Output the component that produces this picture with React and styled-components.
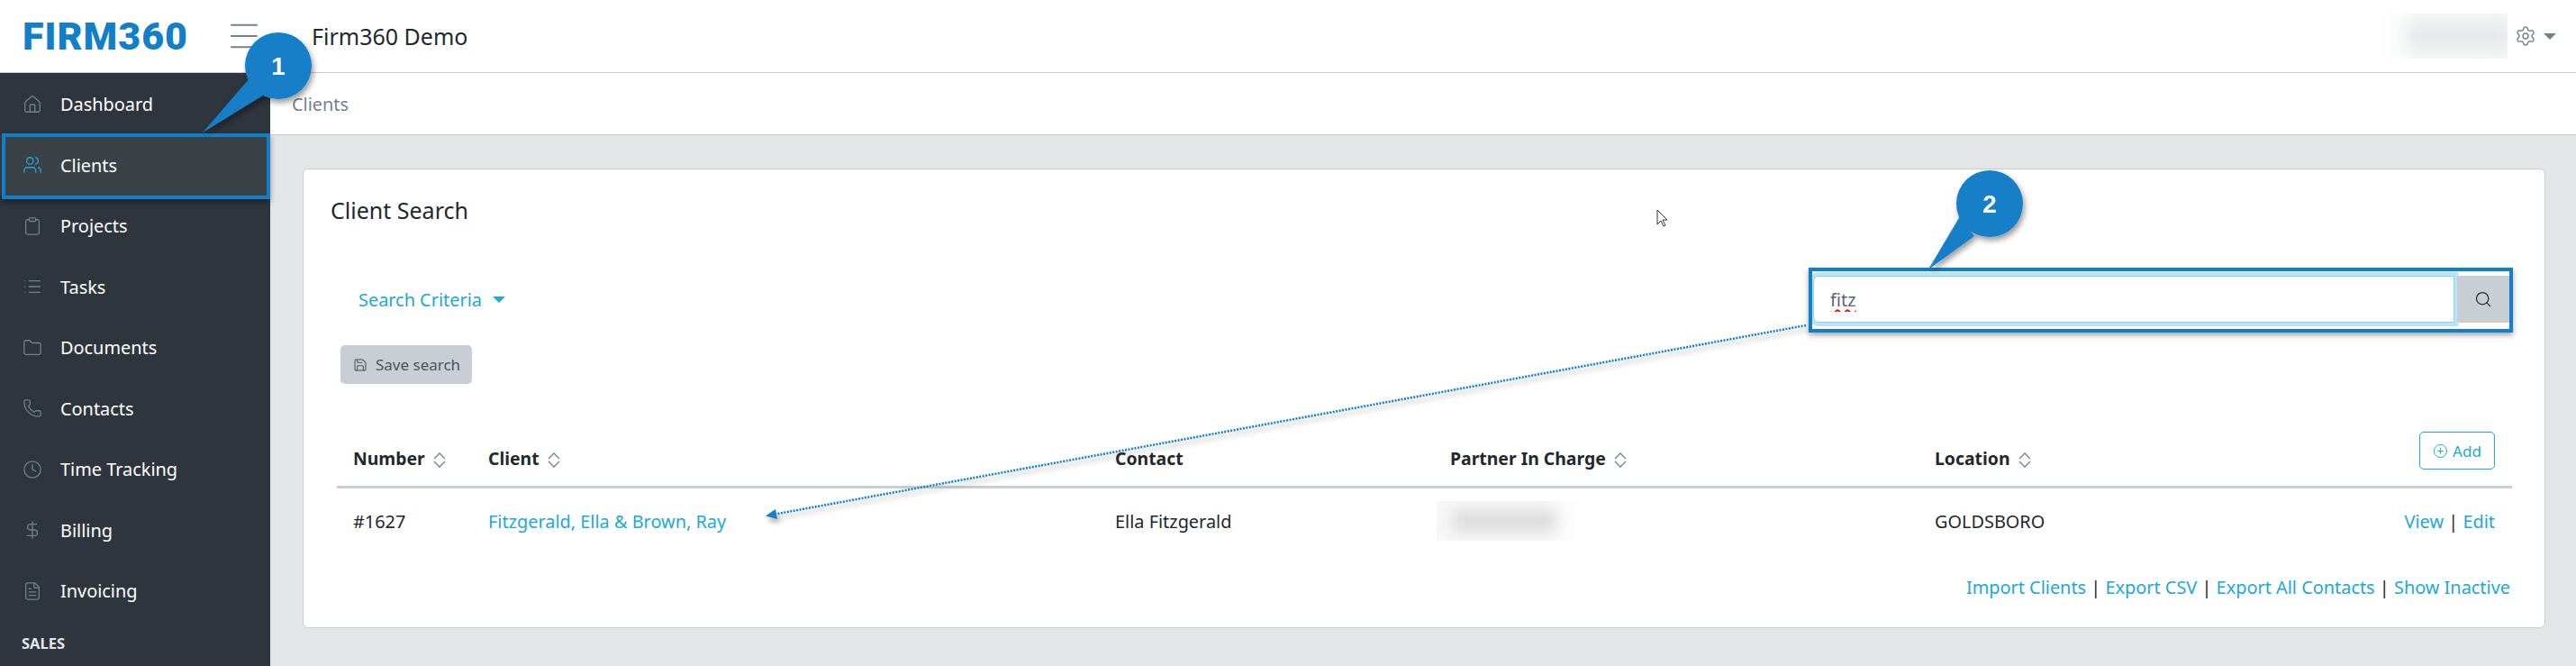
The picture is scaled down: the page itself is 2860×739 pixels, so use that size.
import React from 'react';
import styled, { createGlobalStyle } from 'styled-components';
import {
    Home, Users, Clipboard, List, Folder, Phone, Clock, DollarSign, FileText,
    Save, Search, Settings, CirclePlus, Menu,
} from 'lucide-react';

const GlobalStyle = createGlobalStyle`
    html, body {
        margin: 0;
        padding: 0;
        background: #e4e5e6;
    }
    body {
        font-family: "Noto Sans", "Open Sans", sans-serif;
        font-size: 19.9px;
        color: #23282c;
    }
`;

const Page = styled.div`
    position: relative;
    width: 2860px;
    height: 739px;
    overflow: hidden;
    background: #e4e5e6;
`;

const Header = styled.header`
    display: flex;
    align-items: center;
    height: 80px;
    background: #fff;
    border-bottom: 1px solid #c8ced3;
`;

const Logo = styled.div`
    width: 181px;
    margin-left: 25px;
    font-family: Roboto, sans-serif;
    font-weight: 900;
    font-size: 43px;
    line-height: 44px;
    color: #127fc8;
    letter-spacing: 1px;
    white-space: nowrap;
`;

const Burger = styled.div`
    display: flex;
    margin-left: 44px;
    color: #73818f;
`;

const AppTitle = styled.div`
    margin-left: 54px;
    font-size: 25px;
    color: #23282c;
`;

const UserArea = styled.div`
    display: flex;
    align-items: center;
    margin-left: auto;
    margin-right: 22px;
    color: #73818f;
`;

const UserBlur = styled.div`
    width: 144px;
    height: 50px;
    margin-right: 8px;
    overflow: hidden;
    background: linear-gradient(90deg, #fff 0%, #f6f7f7 30%, #f4f5f5 100%);
`;

const Caret = styled.span`
    display: inline-block;
    width: 0;
    height: 0;
    margin-left: ${(p) => p.$gap || 8}px;
    border-top: 7px solid ${(p) => p.$color || '#73818f'};
    border-left: 7px solid transparent;
    border-right: 7px solid transparent;
`;

const Body = styled.div`
    display: flex;
    height: 658px;
`;

const Sidebar = styled.nav`
    flex: none;
    width: 300px;
    padding-top: 1px;
    background: #2f353d;
`;

const NavRow = styled.div`
    display: flex;
    align-items: center;
    height: 67.5px;
    padding-left: 25px;
    color: #fff;
    background: ${(p) => (p.$active ? '#3a4248' : 'transparent')};
    svg {
        color: ${(p) => (p.$active ? '#20a8d8' : '#73818f')};
    }
`;

const NavLabel = styled.span`
    margin-left: 20px;
`;

const NavTitle = styled.div`
    margin-top: 12px;
    padding-left: 24px;
    font-size: 16.5px;
    font-weight: 700;
    color: #e4e7ea;
`;

const Main = styled.main`
    flex: 1;
    min-width: 0;
`;

const Breadcrumb = styled.div`
    display: flex;
    align-items: center;
    height: 68px;
    padding-left: 24px;
    background: #fff;
    border-bottom: 1px solid #c8ced3;
    color: #73818f;
`;

const Content = styled.div`
    padding: 37px 34px 0 36px;
`;

const Card = styled.section`
    box-sizing: border-box;
    height: 510px;
    padding: 0 38px 0 37px;
    background: #fff;
    border: 1px solid #c8ced3;
    border-radius: 6px;
`;

const CardTitle = styled.h2`
    margin: 29px 0 0 -7px;
    font-size: 25px;
    font-weight: 400;
    line-height: 32px;
`;

const Toolbar = styled.div`
    display: flex;
    align-items: center;
    justify-content: space-between;
    margin-top: 57px;
    height: 52px;
`;

const CriteriaLink = styled.a`
    display: flex;
    align-items: center;
    margin-left: 24px;
    color: #20a8d8;
`;

const SearchGroup = styled.div`
    display: flex;
    width: 773px;
    height: 52px;
    margin-right: 1px;
`;

const SearchInput = styled.input`
    flex: 1;
    min-width: 0;
    box-sizing: border-box;
    height: 52px;
    padding: 0 18px;
    font: inherit;
    color: #5c6873;
    background: #fff;
    border: 1.5px solid #8ad4ee;
    border-radius: 6px 0 0 6px;
    outline: none;
    box-shadow: 0 0 0 4px rgba(32, 168, 216, 0.3);
    text-decoration: underline wavy #f00 1.5px;
    text-underline-offset: 3px;
`;

const SearchButton = styled.button`
    display: flex;
    align-items: center;
    justify-content: center;
    flex: none;
    width: 58px;
    margin-left: 3px;
    padding: 0;
    background: #c8ced3;
    border: none;
    color: #23282c;
`;

const SaveButton = styled.button`
    display: flex;
    align-items: center;
    gap: 9px;
    box-sizing: border-box;
    width: 146px;
    height: 43px;
    margin: 25px 0 0 4px;
    padding: 0 0 0 14px;
    font-family: inherit;
    font-size: 17px;
    color: #4a545c;
    background: #c8ced3;
    border: none;
    border-radius: 5px;
`;

const Table = styled.table`
    width: 2415px;
    margin-top: 51px;
    border-collapse: collapse;
    table-layout: fixed;
`;

const Th = styled.th`
    height: 62px;
    padding: 0 19px 0 18px;
    font-size: 19.4px;
    font-weight: 700;
    text-align: ${(p) => (p.$right ? 'right' : 'left')};
    vertical-align: ${(p) => (p.$right ? 'top' : 'middle')};
    border-bottom: 3px solid #c8ced3;
    white-space: nowrap;
`;

const SortMark = styled.svg`
    margin-left: 9px;
    vertical-align: middle;
    color: #73818f;
`;

const Td = styled.td`
    height: 72px;
    padding: 0 19px 0 18px;
    text-align: ${(p) => (p.$right ? 'right' : 'left')};
`;

const BlurCell = styled.div`
    width: 160px;
    height: 44px;
    margin-left: -15px;
    overflow: hidden;
    background: linear-gradient(90deg, #f7f7f7 0%, #f7f7f7 70%, #fff 100%);
`;

const BlurBlob = styled.div`
    width: 115px;
    height: 24px;
    margin: 10px 0 0 18px;
    background: #dcdcdc;
    filter: blur(8px);
`;

const UserBlob = styled(BlurBlob)`
    width: 110px;
    height: 26px;
    margin: 12px 0 0 34px;
    background: #e6e8e9;
`;

const AddButton = styled.button`
    display: inline-flex;
    align-items: center;
    justify-content: center;
    gap: 5px;
    box-sizing: border-box;
    width: 84px;
    height: 42px;
    margin-top: 2px;
    padding: 0;
    font-family: inherit;
    font-size: 17px;
    color: #20a8d8;
    background: #fff;
    border: 1.5px solid #20a8d8;
    border-radius: 5px;
`;

const TextLink = styled.a`
    color: #20a8d8;
`;

const FooterLinks = styled.div`
    margin-top: 24px;
    line-height: 28px;
    text-align: right;
`;

/* annotations lying over the screenshot */
const ClientsHighlight = styled.div`
    position: absolute;
    box-sizing: border-box;
    left: 2px;
    top: 148px;
    width: 298px;
    height: 73px;
    border: 4px solid #127fc8;
    box-shadow: 0 3px 6px rgba(0, 0, 0, 0.4);
`;

const SearchHighlight = styled.div`
    position: absolute;
    box-sizing: border-box;
    left: 2008px;
    top: 297px;
    width: 782px;
    height: 72px;
    border: 4px solid #127fc8;
    box-shadow: 0 3px 6px rgba(0, 0, 0, 0.35);
`;

const Annotations = styled.svg`
    position: absolute;
    left: 0;
    top: 0;
    pointer-events: none;
`;

const CalloutNumber = styled.text`
    font-family: "Liberation Sans", sans-serif;
    font-weight: 700;
    font-size: 28px;
    fill: #fff;
    text-anchor: middle;
`;

const navItems = [
    { label: 'Dashboard', icon: Home },
    { label: 'Clients', icon: Users, active: true },
    { label: 'Projects', icon: Clipboard },
    { label: 'Tasks', icon: List },
    { label: 'Documents', icon: Folder },
    { label: 'Contacts', icon: Phone },
    { label: 'Time Tracking', icon: Clock },
    { label: 'Billing', icon: DollarSign },
    { label: 'Invoicing', icon: FileText },
];

const Sortable = () => (
    <SortMark width="14" height="18" viewBox="0 0 14 18" fill="none" stroke="currentColor" strokeWidth="1.3">
        <path d="M1 8 L7 2 L13 8" />
        <path d="M1 11 L7 17 L13 11" />
    </SortMark>
);

const Callout = ({ cx, cy, tail, number }) => (
    <g filter="url(#shade)">
        <path d={tail} fill="#127fc8" />
        <circle cx={cx} cy={cy} r="37" fill="#127fc8" />
        <CalloutNumber x={cx} y={cy + 10}>{number}</CalloutNumber>
    </g>
);

export default function App() {
    return (
        <Page>
            <GlobalStyle />
            <Header>
                <Logo>FIRM360</Logo>
                <Burger><Menu size={42} strokeWidth={1.15} /></Burger>
                <AppTitle>Firm360 Demo</AppTitle>
                <UserArea>
                    <UserBlur><UserBlob /></UserBlur>
                    <Settings size={24} strokeWidth={1.4} />
                    <Caret $gap={8} />
                </UserArea>
            </Header>
            <Body>
                <Sidebar>
                    {navItems.map(({ label, icon: Icon, active }) => (
                        <NavRow key={label} $active={active}>
                            <Icon size={22} strokeWidth={1.4} />
                            <NavLabel>{label}</NavLabel>
                        </NavRow>
                    ))}
                    <NavTitle>SALES</NavTitle>
                </Sidebar>
                <Main>
                    <Breadcrumb>Clients</Breadcrumb>
                    <Content>
                        <Card>
                            <CardTitle>Client Search</CardTitle>
                            <Toolbar>
                                <CriteriaLink>Search Criteria<Caret $gap={12} $color="#20a8d8" /></CriteriaLink>
                                <SearchGroup>
                                    <SearchInput readOnly value="fitz" />
                                    <SearchButton><Search size={20} strokeWidth={1.5} /></SearchButton>
                                </SearchGroup>
                            </Toolbar>
                            <SaveButton><Save size={16} strokeWidth={1.6} />Save search</SaveButton>
                            <Table>
                                <colgroup>
                                    <col width="150" />
                                    <col width="696" />
                                    <col width="372" />
                                    <col width="538" />
                                    <col width="400" />
                                    <col width="259" />
                                </colgroup>
                                <thead>
                                    <tr>
                                        <Th>Number<Sortable /></Th>
                                        <Th>Client<Sortable /></Th>
                                        <Th>Contact</Th>
                                        <Th>Partner In Charge<Sortable /></Th>
                                        <Th>Location<Sortable /></Th>
                                        <Th $right>
                                            <AddButton><CirclePlus size={17} strokeWidth={1.4} />Add</AddButton>
                                        </Th>
                                    </tr>
                                </thead>
                                <tbody>
                                    <tr>
                                        <Td>#1627</Td>
                                        <Td><TextLink>Fitzgerald, Ella &amp; Brown, Ray</TextLink></Td>
                                        <Td>Ella Fitzgerald</Td>
                                        <Td><BlurCell><BlurBlob /></BlurCell></Td>
                                        <Td>GOLDSBORO</Td>
                                        <Td $right><TextLink>View</TextLink> | <TextLink>Edit</TextLink></Td>
                                    </tr>
                                </tbody>
                            </Table>
                            <FooterLinks>
                                <TextLink>Import Clients</TextLink> | <TextLink>Export CSV</TextLink> | <TextLink>Export All Contacts</TextLink> | <TextLink>Show Inactive</TextLink>
                            </FooterLinks>
                        </Card>
                    </Content>
                </Main>
            </Body>
            <ClientsHighlight />
            <SearchHighlight />
            <Annotations width="2860" height="739" viewBox="0 0 2860 739">
                <defs>
                    <filter id="shade" x="-30%" y="-30%" width="170%" height="170%">
                        <feDropShadow dx="2" dy="4" stdDeviation="3" floodColor="#000" floodOpacity="0.4" />
                    </filter>
                </defs>
                <g filter="url(#shade)">
                    <line x1="2005" y1="361" x2="858" y2="571" stroke="#127fc8" strokeWidth="2.5" strokeDasharray="2 1.5" />
                    <path d="M850 572.5 L861 565 L863 576 Z" fill="#127fc8" />
                </g>
                <Callout cx={309} cy={73} number="1" tail="M225 147 L276 88 L292 106 Z" />
                <Callout cx={2209} cy={226} number="2" tail="M2141 299 L2176 240 L2192 262 Z" />
                <g>
                    <path d="M1840 233 L1840 249 L1844 245 L1847 251 L1849 250 L1846 244 L1851 244 Z" fill="#fff" stroke="#333" strokeWidth="1" />
                </g>
            </Annotations>
        </Page>
    );
}
